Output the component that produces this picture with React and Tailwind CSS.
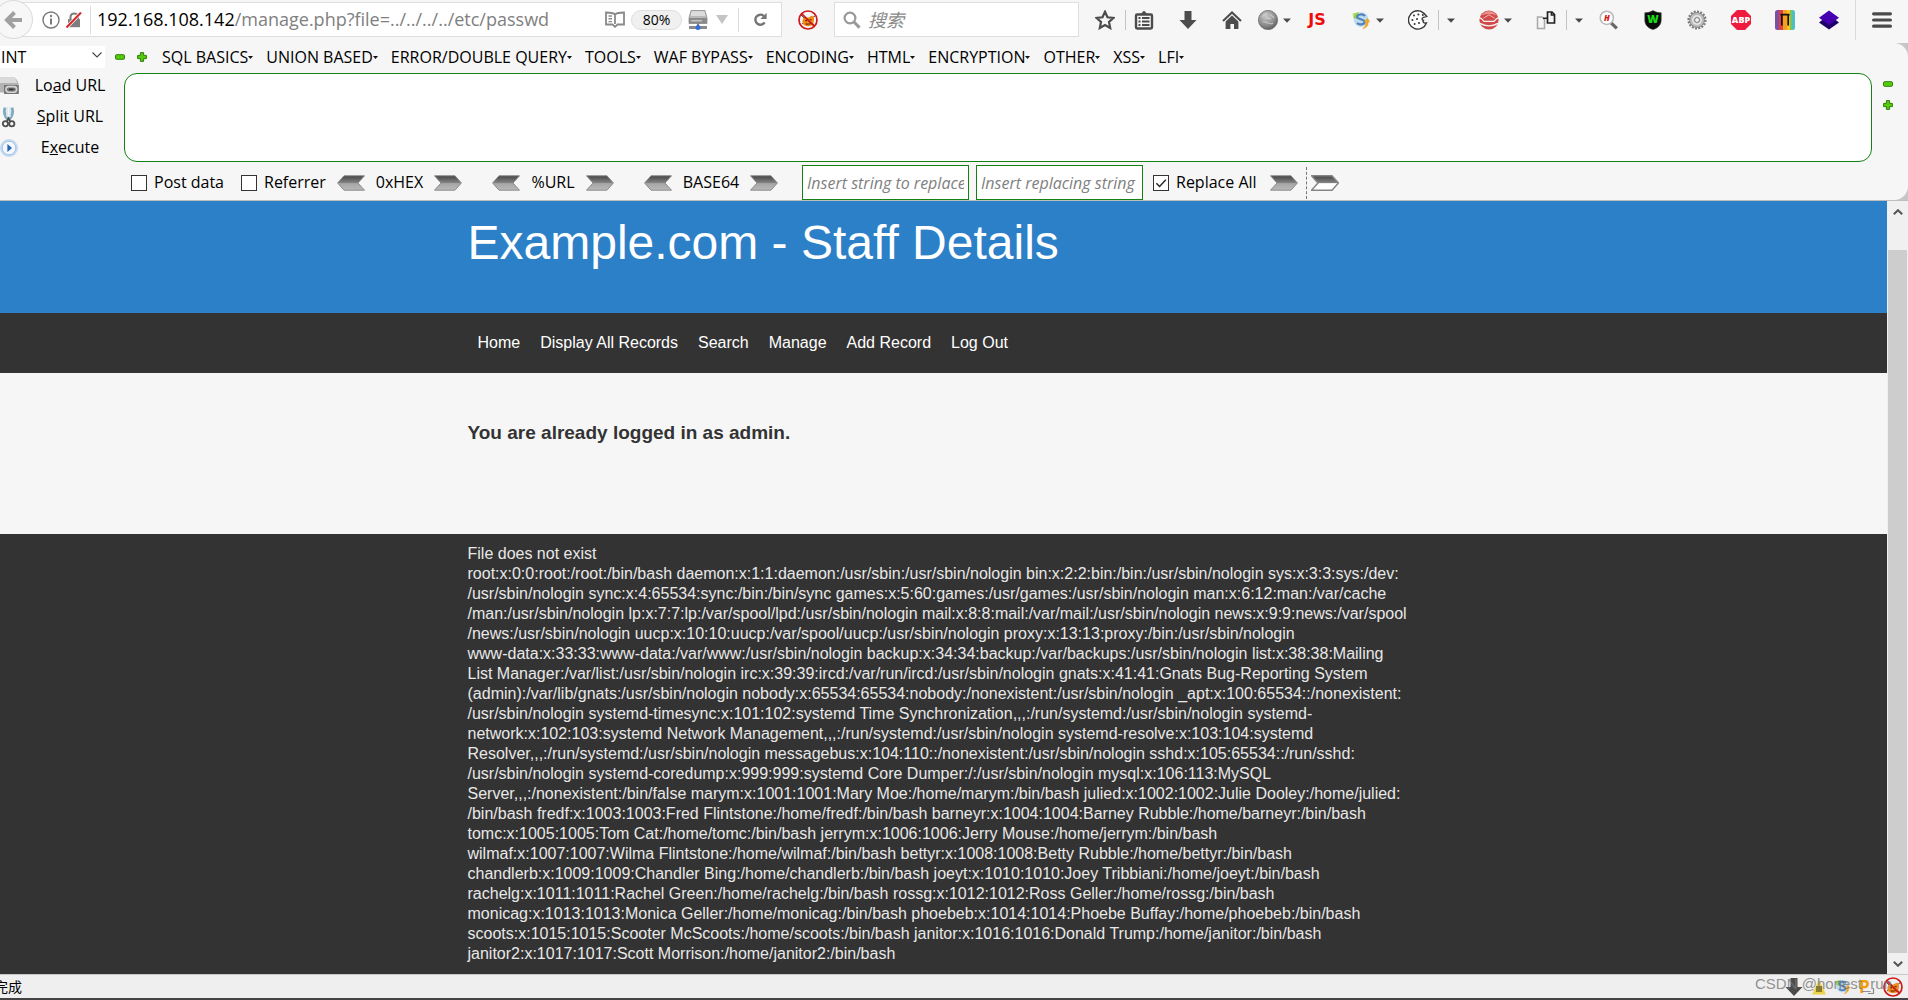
import React from "react";

const MENUS = [
  "SQL BASICS",
  "UNION BASED",
  "ERROR/DOUBLE QUERY",
  "TOOLS",
  "WAF BYPASS",
  "ENCODING",
  "HTML",
  "ENCRYPTION",
  "OTHER",
  "XSS",
  "LFI",
];

const NAV = ["Home", "Display All Records", "Search", "Manage", "Add Record", "Log Out"];

const DUMP = [
  "File does not exist",
  "root:x:0:0:root:/root:/bin/bash daemon:x:1:1:daemon:/usr/sbin:/usr/sbin/nologin bin:x:2:2:bin:/bin:/usr/sbin/nologin sys:x:3:3:sys:/dev:",
  "/usr/sbin/nologin sync:x:4:65534:sync:/bin:/bin/sync games:x:5:60:games:/usr/games:/usr/sbin/nologin man:x:6:12:man:/var/cache",
  "/man:/usr/sbin/nologin lp:x:7:7:lp:/var/spool/lpd:/usr/sbin/nologin mail:x:8:8:mail:/var/mail:/usr/sbin/nologin news:x:9:9:news:/var/spool",
  "/news:/usr/sbin/nologin uucp:x:10:10:uucp:/var/spool/uucp:/usr/sbin/nologin proxy:x:13:13:proxy:/bin:/usr/sbin/nologin",
  "www-data:x:33:33:www-data:/var/www:/usr/sbin/nologin backup:x:34:34:backup:/var/backups:/usr/sbin/nologin list:x:38:38:Mailing",
  "List Manager:/var/list:/usr/sbin/nologin irc:x:39:39:ircd:/var/run/ircd:/usr/sbin/nologin gnats:x:41:41:Gnats Bug-Reporting System",
  "(admin):/var/lib/gnats:/usr/sbin/nologin nobody:x:65534:65534:nobody:/nonexistent:/usr/sbin/nologin _apt:x:100:65534::/nonexistent:",
  "/usr/sbin/nologin systemd-timesync:x:101:102:systemd Time Synchronization,,,:/run/systemd:/usr/sbin/nologin systemd-",
  "network:x:102:103:systemd Network Management,,,:/run/systemd:/usr/sbin/nologin systemd-resolve:x:103:104:systemd",
  "Resolver,,,:/run/systemd:/usr/sbin/nologin messagebus:x:104:110::/nonexistent:/usr/sbin/nologin sshd:x:105:65534::/run/sshd:",
  "/usr/sbin/nologin systemd-coredump:x:999:999:systemd Core Dumper:/:/usr/sbin/nologin mysql:x:106:113:MySQL",
  "Server,,,:/nonexistent:/bin/false marym:x:1001:1001:Mary Moe:/home/marym:/bin/bash julied:x:1002:1002:Julie Dooley:/home/julied:",
  "/bin/bash fredf:x:1003:1003:Fred Flintstone:/home/fredf:/bin/bash barneyr:x:1004:1004:Barney Rubble:/home/barneyr:/bin/bash",
  "tomc:x:1005:1005:Tom Cat:/home/tomc:/bin/bash jerrym:x:1006:1006:Jerry Mouse:/home/jerrym:/bin/bash",
  "wilmaf:x:1007:1007:Wilma Flintstone:/home/wilmaf:/bin/bash bettyr:x:1008:1008:Betty Rubble:/home/bettyr:/bin/bash",
  "chandlerb:x:1009:1009:Chandler Bing:/home/chandlerb:/bin/bash joeyt:x:1010:1010:Joey Tribbiani:/home/joeyt:/bin/bash",
  "rachelg:x:1011:1011:Rachel Green:/home/rachelg:/bin/bash rossg:x:1012:1012:Ross Geller:/home/rossg:/bin/bash",
  "monicag:x:1013:1013:Monica Geller:/home/monicag:/bin/bash phoebeb:x:1014:1014:Phoebe Buffay:/home/phoebeb:/bin/bash",
  "scoots:x:1015:1015:Scooter McScoots:/home/scoots:/bin/bash janitor:x:1016:1016:Donald Trump:/home/janitor:/bin/bash",
  "janitor2:x:1017:1017:Scott Morrison:/home/janitor2:/bin/bash",
];

function Svg({ w = 20, h = 20, box, children }) {
  return (
    <svg width={w} height={h} viewBox={box || `0 0 ${w} ${h}`} className="block shrink-0" aria-hidden="true">
      {children}
    </svg>
  );
}

function IconButton({ label, className = "", children }) {
  return (
    <button type="button" aria-label={label} className={`shrink-0 ${className}`}>
      {children}
    </button>
  );
}

const Separator = ({ className = "" }) => <span className={`h-5 w-px shrink-0 bg-[#c4c4c4] ${className}`} />;

const Caret = ({ className = "" }) => (
  <IconButton label="More" className={className}>
    <Svg w={8} h={5}>
      <path d="M0 0.5H8L4 4.8Z" fill="#4a4a4a" />
    </Svg>
  </IconButton>
);

const BackIcon = () => (
  <Svg>
    <path d="M10.5 2.5L3 10l7.5 7.5M4 10h14" fill="none" stroke="#a0a0a0" strokeWidth="4" />
  </Svg>
);

const InfoIcon = () => (
  <Svg w={18} h={18}>
    <circle cx="9" cy="9" r="8" fill="none" stroke="#7a7a7a" strokeWidth="1.4" />
    <path d="M9 7.6V13.4" stroke="#7a7a7a" strokeWidth="2" />
    <circle cx="9" cy="5" r="1.2" fill="#7a7a7a" />
  </Svg>
);

const InsecureIcon = () => (
  <Svg w={16} h={16}>
    <path d="M4.5 8V4.6a3.8 3.8 0 0 1 7.5 0V8" fill="none" stroke="#7d7d7d" strokeWidth="2" />
    <rect x="2" y="7.2" width="12" height="8" fill="#7d7d7d" />
    <path d="M0.5 15.5L15 0.5" stroke="#f6f6f6" strokeWidth="3.6" />
    <path d="M0.5 15.5L15 0.5" stroke="#d8262c" strokeWidth="2" />
  </Svg>
);

const ReaderIcon = () => (
  <Svg w={20} h={17}>
    <path d="M10 3.5C8.5 2 6 1.5 1 1.5V13.5H7.5L10 15.8L12.5 13.5H19V1.5C14 1.5 11.5 2 10 3.5V13" fill="none" stroke="#8a8a8a" strokeWidth="1.8" />
    <path d="M3.5 5H7M3.5 7.8H7M3.5 10.6H7" stroke="#8a8a8a" strokeWidth="1.4" />
  </Svg>
);

const ServerIcon = () => (
  <Svg>
    <path d="M3 0.5H17L19 8V13.5H1V8Z" fill="#b9b9b9" stroke="#8d8d8d" strokeWidth="0.8" />
    <path d="M3.6 1.2H16.4L17.4 6H2.6Z" fill="#dcdcdc" />
    <path d="M1 8H19V13.5H1Z" fill="#8b8b8b" />
    <path d="M3 10.8H14" stroke="#dedede" strokeWidth="1" />
    <rect x="1" y="16" width="18" height="3" fill="#8a8a8a" />
    <path d="M10 13.5V16" stroke="#777" strokeWidth="2" />
    <circle cx="10" cy="17.5" r="2.5" fill="#2f6fe0" />
  </Svg>
);

const ReloadIcon = () => (
  <Svg w={14} h={15}>
    <path d="M11.6 10.4A5 5 0 1 1 10.8 4" fill="none" stroke="#757575" strokeWidth="2.4" />
    <path d="M13.6 0.8V7H7.4Z" fill="#757575" />
  </Svg>
);

const BlockedBugIcon = () => (
  <Svg>
    <path d="M3 5L6 8M4 14L6.5 12M16 15L14 12.5M17 6L14 8" stroke="#555" strokeWidth="1" />
    <path d="M5.5 8C7 5.6 8.5 8 10 7.6C12 7 14 4.4 15.6 6.4C16.6 9 16 14.6 13 15.8C10 17 5.4 16 4.6 13C4.2 11 4.6 9.4 5.5 8Z" fill="#f08a1c" />
    <path d="M7 10.6h2M11.6 9.6h2M7.6 13.6c2 1 4 .6 5.4-.8" stroke="#7a3300" strokeWidth="1.2" fill="none" />
    <circle cx="10" cy="10" r="9" fill="none" stroke="#cf1717" strokeWidth="1.7" />
    <path d="M3.8 3.8L16.2 16.2" stroke="#cf1717" strokeWidth="1.7" />
  </Svg>
);

const SearchIcon = () => (
  <Svg w={18} h={18}>
    <circle cx="7" cy="7" r="5.4" fill="none" stroke="#999" strokeWidth="2.2" />
    <path d="M11 11L16.6 16.6" stroke="#999" strokeWidth="3" />
  </Svg>
);

const StarIcon = () => (
  <Svg>
    <path d="M10 1.8L12.5 7.3L18.4 8L14 12L15.2 18L10 15L4.8 18L6 12L1.6 8L7.5 7.3Z" fill="none" stroke="#4c4c4c" strokeWidth="2.2" />
  </Svg>
);

const ListIcon = () => (
  <Svg>
    <path d="M6 5V3.5H8C8 0 12 0 12 3.5H14V5Z" fill="#4c4c4c" />
    <rect x="2" y="4.5" width="16" height="14" rx="1.2" fill="none" stroke="#4c4c4c" strokeWidth="2.4" />
    <path d="M4.5 8H6.5M8 8H15.5M4.5 11.5H6.5M8 11.5H15.5M4.5 15H6.5M8 15H15.5" stroke="#4c4c4c" strokeWidth="1.8" />
  </Svg>
);

const DownIcon = () => (
  <Svg>
    <path d="M6.5 1H13.5V10H18.5L10 19L1.5 10H6.5Z" fill="#4c4c4c" />
  </Svg>
);

const HomeIcon = () => (
  <Svg>
    <path d="M1 11L10 2.5L19 11" fill="none" stroke="#4c4c4c" strokeWidth="2" />
    <path d="M3.6 11.6L10 5.6L16.4 11.6V19H12V14H8.4V19H3.6Z" fill="#4c4c4c" />
  </Svg>
);

const GlobeIcon = () => (
  <Svg>
    <defs>
      <radialGradient id="globe" cx="0.4" cy="0.3" r="0.8">
        <stop offset="0" stopColor="#c9c9c9" />
        <stop offset="0.6" stopColor="#8b8b8b" />
        <stop offset="1" stopColor="#4e4e4e" />
      </radialGradient>
    </defs>
    <circle cx="10" cy="10" r="9.6" fill="url(#globe)" stroke="#6c6c6c" strokeWidth="0.8" />
    <path d="M4 7c2-3 4-2 5-4M12 4c1 2 3 2 4 4M5 12c2-1 3 1 5 1s3 2 5 0M8 8c2 1 3-1 5 1" fill="none" stroke="#d9d9d9" strokeWidth="1.1" opacity="0.7" />
  </Svg>
);

const SwirlIcon = ({ size = 20 }) => (
  <Svg w={size} h={size} box="0 0 20 20">
    <path d="M1.5 3.5L8 2L6 10L2.6 8Z" fill="#b5dc4a" opacity="0.9" />
    <circle cx="10" cy="9.6" r="7.4" fill="#b9dcf0" />
    <path d="M2.6 8Q3 3 8 2.4L5.6 9Z" fill="#8ccf5a" />
    <path d="M14 6C12 3.6 6 4 6.2 7C6.4 9.8 13.4 8.6 13.6 12C13.6 14.4 8.4 15.4 6 13" fill="none" stroke="#5580b8" strokeWidth="2.2" />
    <path d="M12 18.6C16 17.6 18 14.6 16.8 11L18.8 12L16.6 8.6L13.4 11.4H15C15.6 14 14.6 16.4 12 18.6Z" fill="#eda62c" stroke="#eda62c" strokeWidth="0.8" />
  </Svg>
);

const CookieIcon = () => (
  <Svg>
    <path d="M12.6 1.2A9.2 9.2 0 1 0 18.4 13C15.6 13.6 14.6 12.2 15.4 10.4C13.6 10.2 13.6 8 15.4 7.4L18.8 6.4L16 3.4L12.6 1.2Z" fill="#fff" stroke="#3a3a3a" strokeWidth="1.4" />
    <g fill="#333">
      <circle cx="6" cy="5.6" r="1" /><circle cx="10.4" cy="4.4" r="1" /><circle cx="14.8" cy="5" r="1" />
      <circle cx="4.4" cy="10" r="1" /><circle cx="9" cy="9" r="1" />
      <circle cx="6.6" cy="14" r="1" /><circle cx="11" cy="13" r="1" />
    </g>
  </Svg>
);

const RedBallIcon = () => (
  <Svg>
    <circle cx="10" cy="10" r="9.6" fill="#d24a48" />
    <path d="M2.4 5.5a9 9 0 0 1 15.2 0Q10 2.6 2.4 5.5Z" fill="#e99290" />
    <path d="M0 7.4Q3 8.8 5 11.4H15Q17 8.8 20 7.4" fill="none" stroke="#f5f5f5" strokeWidth="1.3" />
    <path d="M1 13.4Q10 18.4 19 13.4" fill="none" stroke="#f5f5f5" strokeWidth="1.3" />
    <path d="M4.4 8.2L10 4.8L15.6 8.2" fill="none" stroke="#f3c4c2" strokeWidth="0.9" />
  </Svg>
);

const PagesIcon = () => (
  <Svg>
    <path d="M1.5 7H6L8.5 9.5V18.5H1.5Z" fill="#f5f5f5" stroke="#a9a9a9" strokeWidth="1.5" />
    <path d="M11.5 2H16L18.5 4.5V13H11.5Z" fill="#f5f5f5" stroke="#222" strokeWidth="1.7" />
    <path d="M7 8.2H12M15.4 2V5H18.5" fill="none" stroke="#222" strokeWidth="1.5" />
  </Svg>
);

const HackMagnifierIcon = () => (
  <Svg>
    <path d="M11.8 12.6L17.8 18.4" stroke="#666" strokeWidth="3.2" />
    <circle cx="7.8" cy="7.8" r="6.6" fill="#fff" stroke="#b9b9b9" strokeWidth="1.5" />
    <text x="7.8" y="10.8" textAnchor="middle" fontSize="8" fontWeight="800" fontStyle="italic" fill="#d81414">H</text>
  </Svg>
);

const ShieldIcon = () => (
  <Svg>
    <path d="M10 0.6C13 2.2 15.4 2.8 18.2 2.8V10C18.2 15 15 18 10 19.6C5 18 1.8 15 1.8 10V2.8C4.6 2.8 7 2.2 10 0.6Z" fill="#0b0b0b" stroke="#444" strokeWidth="0.6" />
    <text x="10" y="13.4" textAnchor="middle" fontSize="11" fontWeight="800" fill="#17e017">W</text>
  </Svg>
);

const GearIcon = () => (
  <Svg>
    <circle cx="10" cy="10" r="8.2" fill="none" stroke="#7c7c7c" strokeWidth="2.8" strokeDasharray="1.9 1.3" />
    <circle cx="10" cy="10" r="7.4" fill="#bdbdbd" stroke="#7c7c7c" strokeWidth="0.8" />
    <circle cx="10" cy="10" r="4.2" fill="none" stroke="#eee" strokeWidth="1.2" />
    <circle cx="10" cy="10" r="2.4" fill="#f5f5f5" stroke="#777" strokeWidth="0.9" />
  </Svg>
);

const AbpIcon = () => (
  <Svg>
    <path d="M6 0H14L20 6V14L14 20H6L0 14V6Z" fill="#ee1c3e" />
    <text x="10" y="13.2" textAnchor="middle" fontSize="9" fontWeight="800" fill="#fff">ABP</text>
  </Svg>
);

const RainbowIcon = () => (
  <Svg>
    <clipPath id="rainbow"><rect width="20" height="20" rx="2.5" /></clipPath>
    <g clipPath="url(#rainbow)">
      <rect width="4" height="20" fill="#7c4fa0" />
      <rect x="4" width="4" height="20" fill="#df3f45" />
      <rect x="8" width="4" height="20" fill="#f2a01e" />
      <rect x="12" width="3" height="20" fill="#f3c32a" />
      <rect x="15" width="2" height="20" fill="#7dc35c" />
      <rect x="17" width="3" height="20" fill="#4dbfc0" />
    </g>
    <path d="M5.4 4.6H14.6M6.8 5V15.6M13.2 5V15.6" fill="none" stroke="#111" strokeWidth="1.7" />
  </Svg>
);

const LayersIcon = () => (
  <Svg>
    <path d="M10 5L20 12.4L10 19.4L0 12.4Z" fill="#1f0066" />
    <path d="M10 0.6L20 7.8L10 15L0 7.8Z" fill="#4400b0" />
  </Svg>
);

const MenuIcon = () => (
  <Svg w={20} h={16}>
    <path d="M1.6 1.8H18.4M1.6 8H18.4M1.6 14.2H18.4" stroke="#4a4a4a" strokeWidth="3.2" strokeLinecap="round" />
  </Svg>
);

const MinusIcon = () => (
  <Svg w={10} h={10}>
    <rect x="0.5" y="2.7" width="9" height="4.6" rx="1" fill="#55cc0a" stroke="#2f7d0c" />
  </Svg>
);

const PlusIcon = () => (
  <Svg w={10} h={10}>
    <path d="M3.4 0.6H6.6V3.4H9.4V6.6H6.6V9.4H3.4V6.6H0.6V3.4H3.4Z" fill="#55cc0a" stroke="#2f7d0c" strokeLinejoin="round" />
  </Svg>
);

const DriveIcon = () => (
  <Svg>
    <path d="M0 1.5H14.5Q17 3 18.5 7.5V16.5H0Z" fill="#b3b3b3" />
    <path d="M0 1.5H14.5Q16 3 17 7H0Z" fill="#dadada" />
    <path d="M4 9H18.8V18H4Z" fill="#757575" />
    <rect x="6" y="10.6" width="10.6" height="5.6" rx="2.6" fill="none" stroke="#d6d6d6" strokeWidth="1.6" />
    <path d="M9 13.4H13.6" stroke="#333" strokeWidth="1.6" />
  </Svg>
);

const ScissorsIcon = () => (
  <Svg w={18} h={22}>
    <path d="M5 1.6C3.8 5 4.6 9.6 7.6 13.4M12 1.6C13.2 5 12.4 9.6 9.4 13.4" fill="none" stroke="#7fa9bf" strokeWidth="2.8" />
    <path d="M7 1V11M10 1V11" stroke="#cfe4ee" strokeWidth="1.4" />
    <circle cx="5.4" cy="17.8" r="2.6" fill="none" stroke="#4d4d4d" strokeWidth="1.8" />
    <circle cx="11.8" cy="17.8" r="2.6" fill="none" stroke="#4d4d4d" strokeWidth="1.8" />
    <path d="M7 15.4L8.5 12.4L10.2 15.4" fill="none" stroke="#4d4d4d" strokeWidth="1.8" />
  </Svg>
);

const PlayIcon = () => (
  <Svg>
    <circle cx="9" cy="10" r="9" fill="#c5d9f1" />
    <circle cx="9" cy="10" r="6.8" fill="#f3f8fe" stroke="#a5c2e6" strokeWidth="1" />
    <path d="M7.4 6L12 10L7.4 14Z" fill="#2d62b0" />
  </Svg>
);

function Arrow({ label, left = false, hollow = false }) {
  const id = `arrow-${left ? "l" : "r"}-${hollow ? "h" : "s"}`;
  return (
    <IconButton label={label}>
      <Svg w={28} h={16}>
        <defs>
          <linearGradient id={id} x1="0" y1="0" x2="0" y2="1">
            <stop offset="0" stopColor="#454545" />
            <stop offset="0.5" stopColor="#858585" />
            <stop offset="0.54" stopColor={hollow ? "#ffffff" : "#a6a6a6"} />
            <stop offset="1" stopColor={hollow ? "#ffffff" : "#b9b9b9"} />
          </linearGradient>
        </defs>
        <path
          d={left ? "M27.5 0.8H7L0.6 8L7 15.2H27.5L21 8Z" : "M0.5 0.8H21L27.4 8L21 15.2H0.5L7 8Z"}
          fill={`url(#${id})`}
          stroke="#858585"
          strokeWidth={hollow ? "1.5" : "0.9"}
        />
      </Svg>
    </IconButton>
  );
}

function Converter({ name, width }) {
  return (
    <div className="flex shrink-0 items-center">
      <Arrow label={`Decode ${name}`} left />
      <span className={`${width} pb-0.5 text-center`}>{name}</span>
      <Arrow label={`Encode ${name}`} />
    </div>
  );
}

function Check({ label, className, checked = false }) {
  return (
    <label className={`flex shrink-0 items-center gap-[7px] whitespace-nowrap ${className}`}>
      <span className="relative block size-4">
        <input type="checkbox" defaultChecked={checked} className="peer block size-4 appearance-none border border-[#333] bg-white" />
        <svg viewBox="0 0 16 16" className="pointer-events-none absolute inset-0 hidden size-4 peer-checked:block" aria-hidden="true">
          <path d="M3.4 8.2L6.6 11.4L12.8 4.8" fill="none" stroke="#222" strokeWidth="1.4" />
        </svg>
      </span>
      <span className="pb-0.5">{label}</span>
    </label>
  );
}

function SideAction({ icon, children }) {
  return (
    <button type="button" className="flex h-[25px] w-full items-center">
      <span className="w-5 shrink-0">{icon}</span>
      <span className="w-[100px] pb-0.5 text-center">{children}</span>
    </button>
  );
}

function AddressRow() {
  return (
    <div className="flex h-[43px] items-start pr-4">
      <div className="flex h-10 min-w-0 flex-1 items-start">
        <button type="button" aria-label="Back" className="z-10 -ml-1.5 flex size-[39px] shrink-0 items-center justify-center rounded-full border border-[#d9d9d9] bg-[#f7f7f7]">
          <BackIcon />
        </button>
        <div className="mt-0.5 -ml-5 flex h-[35px] min-w-0 flex-1 items-center border border-[#dedede] bg-white pr-[14px] pl-7">
          <InfoIcon />
          <span className="ml-1.5"><InsecureIcon /></span>
          <span className="ml-2 h-7 w-px shrink-0 bg-[#dcdcdc]" />
          <div className="ml-1.5 min-w-0 flex-1 truncate pb-0.5 text-[18px] leading-6 text-[#808080]">
            <span className="text-black">192.168.108.142</span>/manage.php?file=../../../../etc/passwd
          </div>
          <IconButton label="Reader view"><ReaderIcon /></IconButton>
          <button type="button" className="ml-1.5 h-5 w-[51px] shrink-0 rounded-full border border-[#dedede] bg-[#f0f0f0] text-sm leading-4">80%</button>
          <IconButton label="Proxy" className="ml-1.5"><ServerIcon /></IconButton>
          <IconButton label="Show history" className="ml-2">
            <Svg w={12} h={9}><path d="M0 0H12L6 9Z" fill="#c4c4c4" /></Svg>
          </IconButton>
          <span className="ml-2.5 h-6 w-px shrink-0 bg-[#dcdcdc]" />
          <IconButton label="Reload" className="ml-3.5"><ReloadIcon /></IconButton>
        </div>
      </div>
      <div className="flex h-10 shrink-0 items-center">
        <IconButton label="Scripts blocked" className="mx-4"><BlockedBugIcon /></IconButton>
        <label className="mt-0.5 flex h-[35px] w-[245px] items-center gap-[7px] self-start border border-[#dedede] bg-white pl-2">
          <SearchIcon />
          <input aria-label="搜索" placeholder="搜索" className="w-full min-w-0 bg-transparent text-[18px] italic outline-none placeholder:text-[#8a8a8a]" />
        </label>
        <IconButton label="Bookmark" className="ml-4"><StarIcon /></IconButton>
        <Separator className="ml-2.5" />
        <IconButton label="Library" className="ml-2"><ListIcon /></IconButton>
        <IconButton label="Downloads" className="ml-6"><DownIcon /></IconButton>
        <IconButton label="Home" className="ml-6"><HomeIcon /></IconButton>
        <IconButton label="Profile" className="ml-4"><GlobeIcon /></IconButton>
        <Caret className="ml-[5px]" />
        <button type="button" className="ml-4 w-5 text-center font-['DejaVu_Sans',sans-serif] text-base leading-5 font-bold text-[#f00a0a]">JS</button>
        <IconButton label="Switcher" className="ml-6"><SwirlIcon /></IconButton>
        <Caret className="ml-[5px]" />
        <IconButton label="Cookies" className="ml-6"><CookieIcon /></IconButton>
        <Separator className="ml-2.5" />
        <Caret className="ml-2" />
        <IconButton label="Rotate" className="ml-6"><RedBallIcon /></IconButton>
        <Caret className="ml-[5px]" />
        <IconButton label="Copy pages" className="ml-6"><PagesIcon /></IconButton>
        <Separator className="ml-2.5" />
        <Caret className="ml-2" />
        <IconButton label="HackSearch" className="ml-4"><HackMagnifierIcon /></IconButton>
        <IconButton label="Web shield" className="ml-6"><ShieldIcon /></IconButton>
        <IconButton label="Settings" className="ml-6"><GearIcon /></IconButton>
        <IconButton label="Adblock Plus" className="ml-6"><AbpIcon /></IconButton>
        <IconButton label="Palette" className="ml-6"><RainbowIcon /></IconButton>
        <IconButton label="Layers" className="ml-6"><LayersIcon /></IconButton>
        <span className="ml-4 h-10 w-px bg-[#dadada]" />
        <IconButton label="Open menu" className="ml-4"><MenuIcon /></IconButton>
      </div>
    </div>
  );
}

function HackBar() {
  return (
    <div className="border-b border-[#bdbdbd] bg-[#c6c6c6]">
      <div className="rounded-r-[14px] bg-[#f6f6f6] pt-[3px]">
        <div className="flex h-[22px] items-center">
          <div className="relative h-[22px] w-[105px] shrink-0">
            <select aria-label="Type" className="block h-full w-full appearance-none bg-white pl-px leading-[22px]">
              <option>INT</option>
            </select>
            <svg width="10" height="6" className="pointer-events-none absolute top-1.5 right-[3px]" aria-hidden="true">
              <path d="M0.5 0.5L5 5L9.5 0.5" fill="none" stroke="#444" strokeWidth="1.1" />
            </svg>
          </div>
          <IconButton label="Remove" className="ml-2.5"><MinusIcon /></IconButton>
          <IconButton label="Add" className="ml-3"><PlusIcon /></IconButton>
          <nav className="ml-[15px] flex items-center gap-[13px]">
            {MENUS.map((name) => (
              <button key={name} type="button" className="flex items-center whitespace-nowrap">
                {name}
                <Svg w={5} h={3}><path d="M0 0H5L2.5 3Z" fill="#111" /></Svg>
              </button>
            ))}
          </nav>
        </div>

        <div className="mt-[5px] flex">
          <div className="flex w-[124px] shrink-0 flex-col gap-1.5">
            <SideAction icon={<DriveIcon />}>Lo<u>a</u>d URL</SideAction>
            <SideAction icon={<ScissorsIcon />}><u>S</u>plit URL</SideAction>
            <SideAction icon={<PlayIcon />}>E<u>x</u>ecute</SideAction>
          </div>
          <textarea aria-label="URL" className="block h-[89px] min-w-0 flex-1 resize-none rounded-[13px] border border-[#138213] bg-white p-2 outline-none" />
          <div className="flex w-9 shrink-0 flex-col items-center gap-[11px] pt-1.5 pr-1">
            <IconButton label="Smaller"><MinusIcon /></IconButton>
            <IconButton label="Larger"><PlusIcon /></IconButton>
          </div>
        </div>

        <div className="mt-[3px] flex h-[35px] items-center pl-[131px]">
          <Check label="Post data" className="w-[110px]" />
          <Check label="Referrer" className="w-24" />
          <div className="flex gap-[30px]">
            <Converter name="0xHEX" width="w-[69px]" />
            <Converter name="%URL" width="w-[66px]" />
            <Converter name="BASE64" width="w-[78px]" />
          </div>
          <input aria-label="Insert string to replace" placeholder="Insert string to replace" className="ml-6 h-[35px] w-[167px] shrink-0 border border-[#138213] bg-white px-1 italic outline-none placeholder:text-[#808080]" />
          <input aria-label="Insert replacing string" placeholder="Insert replacing string" className="ml-[7px] h-[35px] w-[167px] shrink-0 border border-[#138213] bg-white px-1 italic outline-none placeholder:text-[#808080]" />
          <Check label="Replace All" className="ml-2.5 w-[117px]" checked />
          <Arrow label="Replace" />
          <span className="mr-1 ml-2 h-8 border-l border-dashed border-[#777]" />
          <Arrow label="Run" hollow />
        </div>
      </div>
    </div>
  );
}

function ScrollBar() {
  return (
    <div className="flex w-[21px] shrink-0 flex-col bg-[#f0f0f0] px-px">
      <button type="button" aria-label="Scroll up" className="flex h-[49px] justify-center pt-2">
        <Svg w={10} h={6}><path d="M0.8 5.2L5 1.2L9.2 5.2" fill="none" stroke="#555" strokeWidth="2" /></Svg>
      </button>
      <div className="flex-1 bg-[#cdcdcd]" />
      <button type="button" aria-label="Scroll down" className="flex h-[21px] items-center justify-center">
        <Svg w={10} h={6}><path d="M0.8 0.8L5 4.8L9.2 0.8" fill="none" stroke="#555" strokeWidth="2" /></Svg>
      </button>
    </div>
  );
}

function Container({ className = "", children }) {
  return <div className={`mx-auto max-w-[952px] ${className}`}>{children}</div>;
}

function StaffPage() {
  return (
    <div className="flex min-w-0 flex-1 flex-col bg-[#333] font-['Liberation_Sans',Arial,sans-serif] text-base text-[#e8e8e8]">
      <header className="h-28 bg-[#2c80c8] pt-3">
        <Container>
          <h1 className="text-5xl leading-[60px] text-white">Example.com - Staff Details</h1>
        </Container>
      </header>
      <nav className="h-[60px]">
        <Container className="flex gap-5 px-2.5 pt-[18px] leading-6 text-white">
          {NAV.map((item) => (
            <a key={item} href="#">{item}</a>
          ))}
        </Container>
      </nav>
      <section className="h-[161px] bg-[#f6f6f6] pt-12">
        <Container>
          <h2 className="text-[19px] leading-6 font-bold text-[#333]">You are already logged in as admin.</h2>
        </Container>
      </section>
      <footer className="py-2.5">
        <Container>
          {DUMP.map((line) => (
            <p key={line} className="leading-5 whitespace-nowrap">{line}</p>
          ))}
        </Container>
      </footer>
    </div>
  );
}

function StatusBar() {
  return (
    <div className="relative flex h-[26px] items-center border-t border-b-2 border-t-[#c8c8c8] border-b-[#444] bg-[#f0eff0] pr-[5px] text-sm">
      <span className="-ml-1.5">完成</span>
      <div className="ml-auto flex items-center gap-2">
        <DownIcon />
        <Svg w={14} h={16}>
          <path d="M7 0.5L14 15.5H0Z" fill="#ead24a" />
          <rect x="4" y="7" width="6" height="6" fill="#8d7d2a" />
        </Svg>
        <SwirlIcon size={17} />
        <Svg w={16} h={20}>
          <text x="0" y="16" fontSize="17" fontWeight="700" fill="#f59a0c">P</text>
          <path d="M9 16.5H14.5V11" fill="none" stroke="#8a8a8a" strokeWidth="1.2" />
        </Svg>
        <BlockedBugIcon />
      </div>
      <span className="absolute top-0 right-4 font-['Liberation_Sans',Arial,sans-serif] text-[15px] leading-[18px] whitespace-nowrap text-[#777]/80">CSDN @honest_run</span>
    </div>
  );
}

export default function App() {
  return (
    <div className="flex min-h-screen flex-col overflow-hidden bg-[#f6f6f6] font-['Open_Sans','Noto_Sans_CJK_SC',sans-serif] text-base leading-[22px] text-black">
      <AddressRow />
      <HackBar />
      <main className="flex flex-1">
        <StaffPage />
        <ScrollBar />
      </main>
      <StatusBar />
    </div>
  );
}
